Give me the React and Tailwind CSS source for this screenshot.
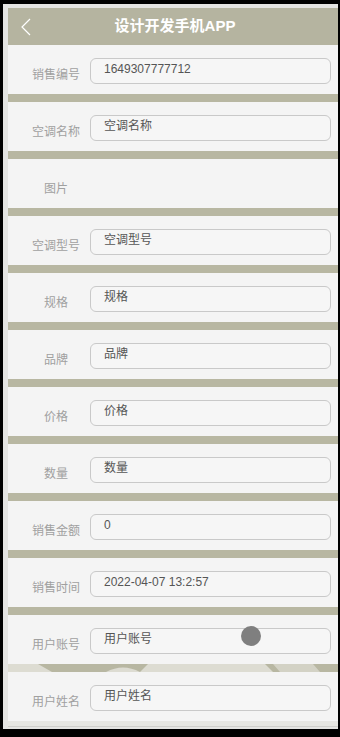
import React from "react";

const rows = [
  { label: "销售编号", value: "1649307777712" },
  { label: "空调名称", value: "空调名称" },
  { label: "图片", value: null },
  { label: "空调型号", value: "空调型号" },
  { label: "规格", value: "规格" },
  { label: "品牌", value: "品牌" },
  { label: "价格", value: "价格" },
  { label: "数量", value: "数量" },
  { label: "销售金额", value: "0" },
  { label: "销售时间", value: "2022-04-07 13:2:57" },
  { label: "用户账号", value: "用户账号" },
  { label: "用户姓名", value: "用户姓名" },
];

const font = { fontFamily: '"Liberation Sans", "Noto Sans CJK SC", sans-serif' };

function Separator({ wave }) {
  if (!wave) return <div className="h-[8px] bg-[#b8b7a2]" />;
  return (
    <div className="h-[8px] bg-[#dddcd2]">
      <svg width="330" height="8" viewBox="0 0 330 8" className="block">
        <polygon points="30,0 140,0 132,8 44,8" fill="#b8b7a2" />
        <path d="M98 8 Q115 -1 132 8 Z" fill="#dddcd2" />
        <polygon points="257,0 330,0 330,8 265,8" fill="#b8b7a2" />
        <polygon points="265,0 305,0 312,8 272,8" fill="#d3d2c5" />
      </svg>
    </div>
  );
}

function Row({ label, value }) {
  return (
    <div className="h-[49px] bg-[#f4f4f4] flex items-start">
      <div className="w-[82px] pl-[14px] mt-[22px] text-center text-[12px] leading-[17px] text-[#a0a0a0]">
        {label}
      </div>
      {value !== null && (
        <div className="mt-[13px] w-[241px] h-[26px] rounded-md border border-[#c9c9c9] bg-[#f6f6f6] pl-[13px] pt-[3px] text-[12px] leading-[14px] text-[#555]">
          {value}
        </div>
      )}
    </div>
  );
}

export default function App() {
  return (
    <div className="w-[340px] h-[737px] bg-black pt-[4px] pl-[3px] pr-[2px]" style={font}>
      <div className="h-[725px] bg-[#e4e4e2] pt-[4px] pl-[5px] relative">
        <div className="h-[37px] bg-[#b5b4a0] flex items-center relative">
          <svg width="12" height="18" viewBox="0 0 12 18" className="absolute left-[12px] top-[10px]">
            <polyline points="10,1 2,9 10,17" fill="none" stroke="#fff" strokeWidth="1.2" />
          </svg>
          <div className="w-full text-center text-white font-bold text-[15px] pl-[4px]">设计开发手机APP</div>
        </div>
        {rows.map((r, i) => (
          <React.Fragment key={r.label}>
            <Row {...r} />
            {i < rows.length - 1 && <Separator wave={i === 10} />}
          </React.Fragment>
        ))}
        <div className="h-[6px] bg-[#e6e6e2] border-b border-[#cfcfcb]" />
        <div className="absolute left-[238px] top-[622px] w-[20px] h-[20px] rounded-full bg-[#7f7f7f]" />
      </div>
    </div>
  );
}
